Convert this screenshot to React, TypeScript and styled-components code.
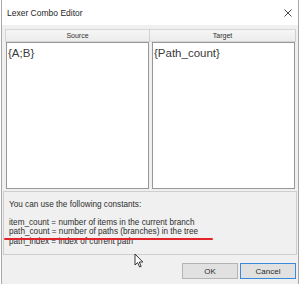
import {ReactElement} from "react";
import styled, {createGlobalStyle} from "styled-components";

const GlobalStyle = createGlobalStyle`
    html, body {
        margin: 0;
        padding: 0;
        background: #ffffff;
    }

    body {
        font-family: "Liberation Sans", Arial, sans-serif;
    }

    *, *::before, *::after {
        box-sizing: border-box;
    }
`;

const Frame = styled.div`
    width: 300px;
    height: 284px;
    padding: 0 1px;
    overflow: hidden;
`;

const Window = styled.div`
    position: relative;
    height: 100%;
    background: #f0f0f0;
    border-left: 1px solid #a8a8a8;
    border-right: 1px solid #a8a8a8;
    display: flex;
    flex-direction: column;
`;

const TitleBar = styled.div`
    height: 25px;
    flex-shrink: 0;
    background: #ffffff;
    display: flex;
    align-items: center;
    justify-content: space-between;
    padding: 0 6px 0 5px;
`;

const Title = styled.span`
    font-size: 8.5px;
    color: #1e1e1e;
`;

const CloseIcon = styled.svg`
    width: 8px;
    height: 8px;
    margin-top: 1px;
`;

const Content = styled.div`
    flex: 1;
    display: flex;
    flex-direction: column;
    padding: 4px 1px 0 1px;
`;

const EditorGrid = styled.div`
    display: grid;
    grid-template-columns: 145px 146px;
    margin-left: 2px;
`;

const Column = styled.div`
    display: flex;
    flex-direction: column;
`;

const ColumnHeader = styled.div<{ $first?: boolean }>`
    height: 13px;
    display: flex;
    align-items: center;
    justify-content: center;
    font-size: 7px;
    color: #303030;
    background: linear-gradient(#f6f6f6, #ececec);
    border-top: 1px solid #d6d6d6;
    border-bottom: 1px solid #d6d6d6;
    border-left: ${props => props.$first ? "1px solid #d6d6d6" : "none"};
    border-right: 1px solid #d0d0d0;
`;

const TextBox = styled.div<{ $first?: boolean }>`
    height: 147px;
    margin: 0 1px 0 ${props => props.$first ? "1px" : "2px"};
    background: #ffffff;
    border: 1px solid #979797;
    padding: 4px 1px;
    font-size: 11.5px;
    line-height: 13px;
    color: #3a3a3a;
`;

const InfoPanel = styled.div`
    margin-top: 2px;
    height: 64px;
    border: 1px solid #cfcfcf;
    padding: 8px 5px 0;
    font-size: 8.2px;
    line-height: 9.5px;
    color: #2e2e2e;
`;

const InfoIntro = styled.p`
    margin: 0 0 8px;
`;

const InfoLine = styled.div`
    white-space: nowrap;
`;

const Footer = styled.div`
    display: flex;
    justify-content: flex-end;
    gap: 2px;
    padding: 8px 1px 0 0;
`;

const Button = styled.button<{ $focused?: boolean }>`
    width: 56px;
    height: 16px;
    padding: 0;
    font-family: inherit;
    font-size: 8px;
    color: #2a2a2a;
    background: #e1e1e1;
    border: ${props => props.$focused ? "1.5px solid #3b8ad9" : "1px solid #b4b4b4"};
`;

const Underline = styled.div`
    position: absolute;
    left: 2px;
    top: 238px;
    width: 209px;
    height: 2px;
    background: #e3232a;
    border-radius: 1px;
`;

const Cursor = styled.svg`
    position: absolute;
    left: 132px;
    top: 253px;
    width: 10px;
    height: 15px;
`;

const App = (): ReactElement => {
    return (
        <Frame>
            <GlobalStyle/>
            <Window>
                <TitleBar>
                    <Title>Lexer Combo Editor</Title>
                    <CloseIcon viewBox="0 0 8 8">
                        <path d="M0.5 0.5 L7.5 7.5 M7.5 0.5 L0.5 7.5" stroke="#333" strokeWidth="0.9" fill="none"/>
                    </CloseIcon>
                </TitleBar>
                <Content>
                    <EditorGrid>
                        <Column>
                            <ColumnHeader $first>Source</ColumnHeader>
                            <TextBox $first>{"{A;B}"}</TextBox>
                        </Column>
                        <Column>
                            <ColumnHeader>Target</ColumnHeader>
                            <TextBox>{"{Path_count}"}</TextBox>
                        </Column>
                    </EditorGrid>
                    <InfoPanel>
                        <InfoIntro>You can use the following constants:</InfoIntro>
                        <InfoLine>item_count = number of items in the current branch</InfoLine>
                        <InfoLine>path_count = number of paths (branches) in the tree</InfoLine>
                        <InfoLine>path_index = index of current path</InfoLine>
                    </InfoPanel>
                    <Footer>
                        <Button>OK</Button>
                        <Button $focused>Cancel</Button>
                    </Footer>
                </Content>
                <Underline/>
                <Cursor viewBox="0 0 10 15">
                    <path d="M1 1 L1 12 L3.6 9.6 L5.6 14 L7.2 13.3 L5.3 9 L8.8 9 Z" fill="#ffffff" stroke="#222" strokeWidth="0.9" strokeLinejoin="round"/>
                </Cursor>
            </Window>
        </Frame>
    );
};

export default App;
